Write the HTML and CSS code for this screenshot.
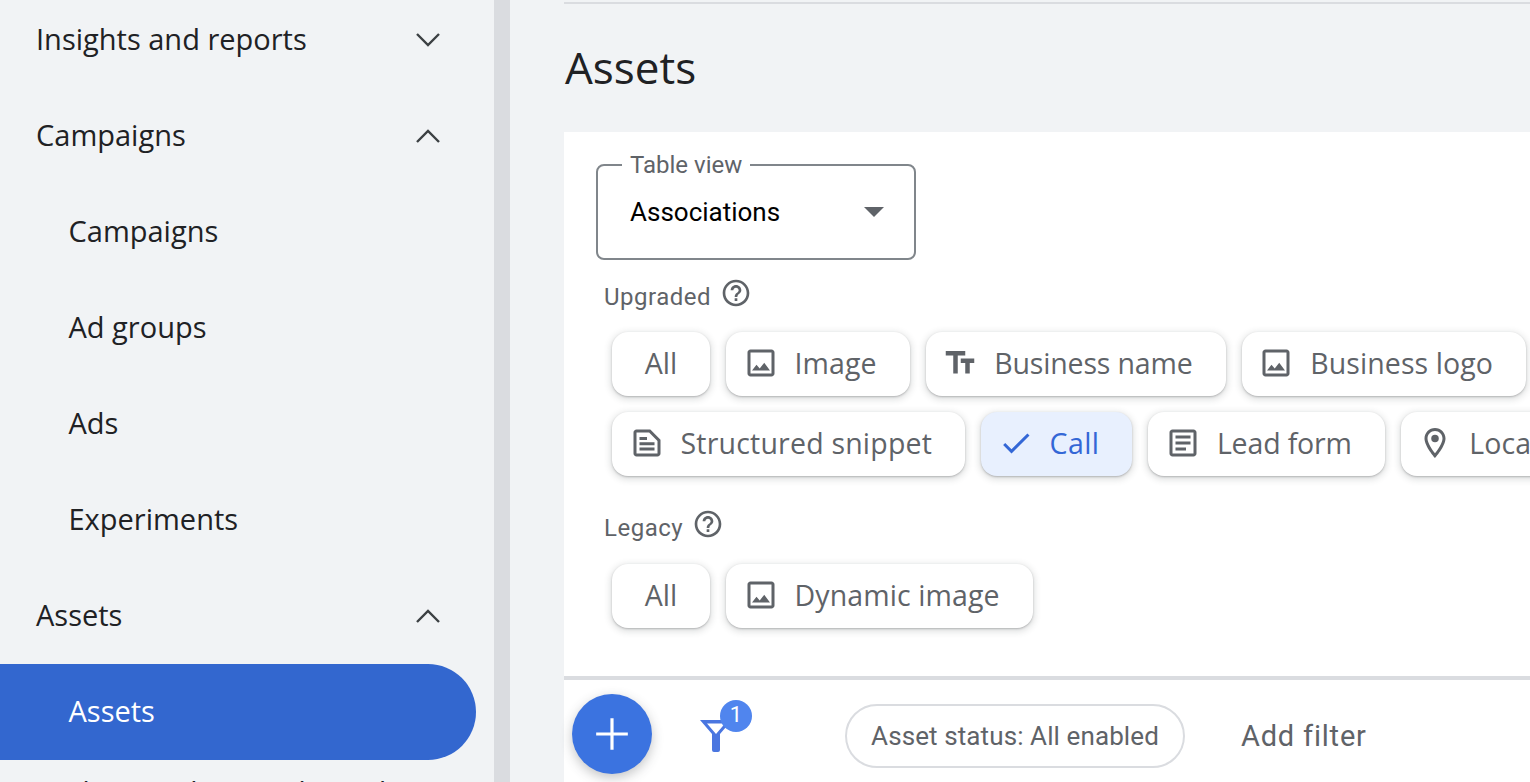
FILE: index.html
```html
<!DOCTYPE html>
<html lang="en">
  <head>
    <meta charset="UTF-8" />
    <title>Assets</title>
    <link rel="stylesheet" href="styles.css">
  </head>
  <body>
    <svg class="defs" width="0" height="0">
      <symbol id="ic-image" viewBox="0 0 24 24">
        <path d="M19 5v14H5V5h14m0-2H5c-1.100 0-2 .9-2 2v14c0 1.100.9 2 2 2h14c1.100 0 2-.9 2-2V5c0-1.100-.9-2-2-2z"/>
        <path d="M14.140 11.860l-3 3.870L9 13.140 6 17h12z"/>
      </symbol>
      <symbol id="ic-help" viewBox="0 0 24 24">
        <path d="M11 18h2v-2h-2v2zm1-16C6.480 2 2 6.480 2 12s4.480 10 10 10 10-4.480 10-10S17.520 2 12 2zm0 18c-4.410 0-8-3.590-8-8s3.590-8 8-8 8 3.590 8 8-3.590 8-8 8zm0-14c-2.210 0-4 1.790-4 4h2c0-1.100.9-2 2-2s2 .9 2 2c0 2-3 1.750-3 5h2c0-2.250 3-2.500 3-5 0-2.210-1.790-4-4-4z"/>
      </symbol>
    </svg>

    <nav class="sidebar">
      <div class="nav-item">Insights and reports
        <svg class="chev" viewBox="0 0 24 24"><path d="M1 6l11 11L23 6"/></svg>
      </div>
      <div class="nav-item">Campaigns
        <svg class="chev" viewBox="0 0 24 24"><path d="M1 18L12 7l11 11"/></svg>
      </div>
      <div class="nav-item sub">Campaigns</div>
      <div class="nav-item sub">Ad groups</div>
      <div class="nav-item sub">Ads</div>
      <div class="nav-item sub">Experiments</div>
      <div class="nav-item">Assets
        <svg class="chev" viewBox="0 0 24 24"><path d="M1 18L12 7l11 11"/></svg>
      </div>
      <div class="nav-item sub active">Assets</div>
      <div class="nav-item wrap">Audiences, keywords, and content</div>
    </nav>
    <div class="scrollbar"></div>

    <main class="main">
      <div class="topline"></div>
      <h1 class="title">Assets</h1>

      <section class="card">
        <fieldset class="select">
          <legend>Table view</legend>
          <div class="select-row">
            <span>Associations</span>
            <i class="caret"></i>
          </div>
        </fieldset>

        <div class="group-label upgraded">Upgraded
          <svg class="help"><use href="#ic-help"/></svg>
        </div>
        <div class="chips">
          <div class="chip all">All</div>
          <div class="chip"><svg class="ic"><use href="#ic-image"/></svg>Image</div>
          <div class="chip tight">
            <svg class="ic" viewBox="0 0 24 24"><path d="M2.500 4v3h5v12h3V7h5V4h-13zm19 5h-9v3h3v7h3v-7h3V9z"/></svg>Business name
          </div>
          <div class="chip"><svg class="ic"><use href="#ic-image"/></svg>Business logo</div>
        </div>
        <div class="chips">
          <div class="chip wide">
            <svg class="ic" viewBox="0 0 24 24"><path d="M14.200 3H5c-1.100 0-2 .9-2 2v14c0 1.100.9 2 2 2h14c1.100 0 2-.9 2-2V9.800L14.200 3zM19 19H5V5h8.400L19 10.600V19zM7 8h5v2H7zm0 3.500h10v2H7zM7 15h10v2H7z"/></svg>Structured snippet
          </div>
          <div class="chip selected">
            <svg class="ic" viewBox="0 0 24 24"><path d="M9 16.170L4.830 12l-1.420 1.410L9 19 21 7l-1.410-1.410z"/></svg>Call
          </div>
          <div class="chip tight">
            <svg class="ic" viewBox="0 0 24 24"><path d="M19 5v14H5V5h14m0-2H5c-1.100 0-2 .9-2 2v14c0 1.100.9 2 2 2h14c1.100 0 2-.9 2-2V5c0-1.100-.9-2-2-2zM7 7h10v2H7zm0 4h10v2H7zm0 4h7v2H7z"/></svg>Lead form
          </div>
          <div class="chip">
            <svg class="ic" viewBox="0 0 24 24"><path d="M12 2C8.130 2 5 5.130 5 9c0 5.250 7 13 7 13s7-7.750 7-13c0-3.870-3.130-7-7-7zM7 9c0-2.760 2.240-5 5-5s5 2.240 5 5c0 2.880-2.880 7.190-5 9.880C9.920 16.210 7 11.850 7 9z"/><circle cx="12" cy="9" r="2.500"/></svg>Location
          </div>
        </div>

        <div class="group-label legacy">Legacy
          <svg class="help"><use href="#ic-help"/></svg>
        </div>
        <div class="chips">
          <div class="chip all">All</div>
          <div class="chip"><svg class="ic"><use href="#ic-image"/></svg>Dynamic image</div>
        </div>

        <div class="filter-bar">
          <button class="fab">
            <svg viewBox="0 0 24 24"><path d="M11 2h2v9h9v2h-9v9h-2v-9H2v-2h9z"/></svg>
          </button>
          <div class="funnel">
            <svg viewBox="0 0 32 32"><path fill-rule="evenodd" d="M0 0h32L20 14v16q0 2-2 2h-4q-2 0-2-2V14zM7 3.500l9 10.500 9-10.500z"/></svg>
            <span class="badge">1</span>
          </div>
          <div class="pill">Asset status: All enabled</div>
          <div class="add-filter">Add filter</div>
        </div>
      </section>
    </main>
  </body>
</html>
```

FILE: styles.css
```css
* {
    box-sizing: border-box;
    margin: 0;
    padding: 0;
}
html, body {
    height: 782px;
    overflow: hidden;
}
body {
    display: flex;
    background-color: #f1f3f5;
    font-family: "Roboto", "Liberation Sans", sans-serif;
    color: #5f6368;
}
.defs {
    position: absolute;
}

/* left menu */
.sidebar {
    width: 494px;
    flex: none;
    margin-top: -8px;
    padding-right: 18px;
    font-family: "Open Sans", "Noto Sans", sans-serif;
    font-size: 29px;
    color: #202124;
}
.nav-item {
    height: 96px;
    padding-left: 36px;
    padding-right: 36px;
    padding-bottom: 3px;
    display: flex;
    align-items: center;
    justify-content: space-between;
    white-space: nowrap;
}
.nav-item.sub {
    padding-left: 68.5px;
}
.nav-item.active {
    background-color: #3367cf;
    color: white;
    border-radius: 0 48px 48px 0;
}
.nav-item.wrap {
    white-space: normal;
    align-items: flex-start;
    padding-top: 12px;
    line-height: 40px;
}
.chev {
    width: 24px;
    height: 24px;
    margin-top: 3px;
    fill: none;
    stroke: #3c4043;
    stroke-width: 2.4;
}
.scrollbar {
    width: 16px;
    flex: none;
    background-color: #dadce0;
}

/* main area */
.main {
    flex: 1;
    min-width: 0;
    padding-left: 54px;
    overflow: hidden;
}
.topline {
    height: 2px;
    margin-top: 2px;
    background-color: #dadce0;
}
.title {
    height: 128px;
    padding-top: 33px;
    padding-left: 1px;
    font-size: 44px;
    line-height: 60px;
    font-weight: 400;
    color: #202124;
    font-family: "Open Sans", "Noto Sans", sans-serif;
}
.card {
    height: 650px;
    background-color: white;
    padding-top: 32px;
}

/* Table view select */
.select {
    width: 320px;
    height: 107px;
    margin-left: 32px;
    margin-top: -11px;
    border: 2px solid #80868b;
    border-radius: 8px;
    padding: 0 30px 0 32px;
}
.select legend {
    padding: 0 8px;
    margin-left: -8px;
    font-size: 24px;
    line-height: 24px;
    color: #5f6368;
}
.select-row {
    display: flex;
    justify-content: space-between;
    align-items: center;
    padding-top: 17px;
    font-size: 26px;
    line-height: 36px;
    color: #000;
}
.caret {
    width: 0;
    height: 0;
    border-left: 10px solid transparent;
    border-right: 10px solid transparent;
    border-top: 10px solid #5f6368;
}

/* group labels */
.group-label {
    display: flex;
    align-items: center;
    gap: 9px;
    margin-left: 40px;
    font-size: 24px;
    line-height: 32px;
    letter-spacing: 0.5px;
}
.upgraded {
    margin-top: 21px;
    height: 32px;
    margin-bottom: 19px;
}
.legacy {
    margin-top: 36px;
    height: 32px;
    margin-bottom: 20px;
}
.help {
    width: 32px;
    height: 32px;
    fill: #5f6368;
    margin-top: -9px;
}

/* chips */
.chips {
    display: flex;
    gap: 16px;
    margin-left: 48px;
    margin-bottom: 16px;
    white-space: nowrap;
}
.chip {
    height: 64px;
    flex: none;
    display: flex;
    align-items: center;
    gap: 16px;
    padding: 0 33px 2px 16.5px;
    border-radius: 16px;
    background-color: white;
    box-shadow: 0 1px 2px rgba(60, 64, 67, 0.3), 0 2px 6px 2px rgba(60, 64, 67, 0.15);
    font-family: "Open Sans", "Noto Sans", sans-serif;
    font-size: 28.5px;
    letter-spacing: 0.1px;
    color: #5f6368;
}
.chip.tight {
    letter-spacing: -0.15px;
}
.chip.wide {
    letter-spacing: 0.2px;
}
.chip.all {
    width: 98px;
    padding: 0 0 2px;
    justify-content: center;
}
.chip.selected {
    background-color: #e8f0fe;
    color: #3367d6;
    letter-spacing: 0.4px;
}
.ic {
    width: 36px;
    height: 36px;
    fill: #5f6368;
}
.chip.selected .ic {
    fill: #3367d6;
}

/* filter bar */
.filter-bar {
    height: 106px;
    margin-top: 48px;
    border-top: 4px solid #dadce0;
    display: flex;
    align-items: flex-start;
}
.fab {
    width: 80px;
    height: 80px;
    margin-left: 8px;
    margin-top: 14px;
    border: none;
    border-radius: 50%;
    background-color: #3b73e0;
    box-shadow: 0 4px 12px rgba(60, 64, 67, 0.3);
    display: flex;
    align-items: center;
    justify-content: center;
}
.fab svg {
    width: 38px;
    height: 38px;
    fill: white;
}
.funnel {
    width: 32px;
    height: 32px;
    margin-left: 48px;
    margin-top: 40px;
    position: relative;
}
.funnel svg {
    width: 32px;
    height: 32px;
    fill: #4a76e0;
}
.badge {
    position: absolute;
    left: 20px;
    top: -20px;
    width: 32px;
    height: 32px;
    border-radius: 50%;
    background-color: #5085ee;
    color: white;
    font-size: 22px;
    line-height: 30px;
    text-align: center;
}
.pill {
    width: 340px;
    height: 64px;
    margin-left: 113px;
    margin-top: 24px;
    border: 2px solid #dadce0;
    border-radius: 32px;
    display: flex;
    align-items: center;
    justify-content: center;
    font-size: 26px;
    letter-spacing: 0.1px;
    white-space: nowrap;
}
.add-filter {
    margin-left: 56px;
    margin-top: 24px;
    font-size: 29px;
    line-height: 64px;
    letter-spacing: 0.8px;
    white-space: nowrap;
}
```
